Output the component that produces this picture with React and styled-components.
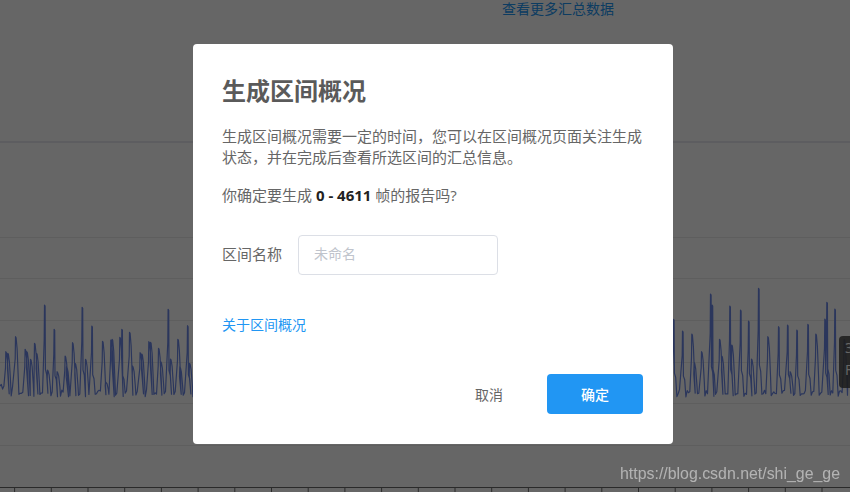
import React from 'react';
import styled, { createGlobalStyle } from 'styled-components';

const leftPeaks = [
  [18, 275], [24, 280], [47, 230], [76, 268], [81, 275], [92, 298], [104, 250], [110, 280],
  [134, 135], [143, 330], [163, 208], [172, 335], [196, 288], [200, 320], [218, 248], [226, 310],
  [247, 142], [257, 298], [276, 198], [308, 244], [317, 365], [333, 240], [337, 238], [360, 232],
  [366, 208], [389, 217], [398, 318], [421, 278], [426, 282], [447, 245], [452, 247], [476, 265],
  [483, 305], [505, 148], [512, 297], [534, 238], [540, 320], [563, 197], [569, 310],
];

const rightPeaks = [
  [11, 178], [38, 213], [66, 222], [73, 307], [95, 275], [122, 102], [127, 135], [149, 238],
  [156, 288], [180, 138], [186, 255], [212, 150], [236, 183], [245, 297], [266, 85], [294, 230],
  [326, 200], [353, 195], [361, 335], [381, 210], [414, 193], [438, 222], [465, 177], [471, 127],
  [495, 147], [523, 238], [535, 330],
];

// peaks were read off a 3x crop, so bring them back to page pixels
const peaks = [
  ...leftPeaks.map(([x, y]) => [x / 3, 260 + y / 3]),
  ...rightPeaks.map(([x, y]) => [670 + x / 3, 260 + y / 3]),
];

const buildTrace = () => {
  let seed = 7;
  const noise = () => {
    seed = (seed * 16807) % 2147483647;
    return seed / 2147483647;
  };
  const pts = [[0, 386]];
  let cursor = 0;
  peaks.forEach(([x, top]) => {
    while (cursor < x - 2) {
      cursor += 1.3;
      if (cursor < x - 2) {
        const base = cursor < 14 ? 387 : 392;
        pts.push([cursor, base + (noise() - 0.5) * 5]);
      }
    }
    const h = 392 - top;
    pts.push([x - 0.5, top + h * 0.4]);
    pts.push([x - 0.2, top]);
    pts.push([x + 0.4, top + 1]);
    if (h < 60) {
      pts.push([x + 1.4, top + h * 0.22]);
      pts.push([x + 2.6, top + h * 0.75]);
    } else {
      pts.push([x + 0.7, top + h * 0.74]);
      pts.push([x + 2, top + h * 0.8]);
    }
    pts.push([x + 3.2, 393 + noise() * 4]);
    cursor = x + 3.2;
  });
  while (cursor < 850) {
    cursor += 1.3;
    pts.push([cursor, 392 + (noise() - 0.5) * 5]);
  }
  return pts.map(([x, y], i) => `${i ? 'L' : 'M'}${x.toFixed(1)} ${y.toFixed(1)}`).join('');
};

const trace = buildTrace();
const gridLines = [237, 278, 320, 362, 403, 445];
const ticks = Array.from({ length: 23 }, (_, i) => 14.6 + i * 36.7);

const App = () => {
  return (
    <Page>
      <GlobalStyle />
      <MoreRow>
        <MoreLink>查看更多汇总数据</MoreLink>
      </MoreRow>
      <Chart viewBox="0 16 850 476" preserveAspectRatio="none">
        <line x1="0" x2="850" y1="142" y2="142" stroke="#e8e8f0" strokeWidth="2" />
        {gridLines.map((y) => (
          <line key={y} x1="0" x2="850" y1={y + 0.5} y2={y + 0.5} stroke="#ececec" />
        ))}
        <path d={trace} fill="none" stroke="#6c88e6" strokeWidth="1.2" strokeLinejoin="round" />
        <line x1="0" x2="850" y1="487.5" y2="487.5" stroke="#6a6a6a" />
        {ticks.map((x) => (
          <line key={x} x1={x} x2={x} y1="487" y2="492" stroke="#6a6a6a" />
        ))}
      </Chart>
      <Tooltip>
        <span>3</span>
        <span>F</span>
      </Tooltip>

      <Overlay>
        <Modal>
          <Title>生成区间概况</Title>
          <Text>生成区间概况需要一定的时间，您可以在区间概况页面关注生成状态，并在完成后查看所选区间的汇总信息。</Text>
          <Question>
            你确定要生成 <b>0 - 4611</b> 帧的报告吗?
          </Question>
          <Field>
            <FieldLabel>区间名称</FieldLabel>
            <NameInput placeholder="未命名" />
          </Field>
          <AboutLink>关于区间概况</AboutLink>
          <Footer>
            <CancelButton>取消</CancelButton>
            <OkButton>确定</OkButton>
          </Footer>
        </Modal>
      </Overlay>

      <Watermark>https://blog.csdn.net/shi_ge_ge</Watermark>
    </Page>
  );
};

const GlobalStyle = createGlobalStyle`
  html, body {
    margin: 0;
    padding: 0;
    background: #fff;
  }
  body {
    font-family: "Open Sans", "Noto Sans CJK SC", sans-serif;
  }
`;

const Page = styled.div`
  position: relative;
  width: 850px;
  height: 492px;
  overflow: hidden;
  display: flex;
  flex-direction: column;
  background: #fff;
`;

const MoreRow = styled.div`
  height: 16px;
  padding-left: 502px;
  line-height: 16px;
`;

const MoreLink = styled.a`
  font-size: 14px;
  color: #2196f3;
`;

const Chart = styled.svg`
  display: block;
  width: 850px;
  height: 476px;
`;

const Tooltip = styled.div`
  position: absolute;
  left: 839px;
  top: 336px;
  width: 120px;
  height: 52px;
  box-sizing: border-box;
  padding: 1px 6px;
  display: flex;
  flex-direction: column;
  border-radius: 4px;
  background: rgba(70, 70, 70, 0.85);
  color: #fff;
  font-size: 14px;
  line-height: 22px;
`;

const Overlay = styled.div`
  position: fixed;
  inset: 0;
  width: 850px;
  height: 492px;
  box-sizing: border-box;
  padding: 0 0 4px 16px;
  display: flex;
  align-items: center;
  justify-content: center;
  background: rgba(0, 0, 0, 0.6);
`;

const Modal = styled.div`
  width: 480px;
  height: 400px;
  box-sizing: border-box;
  padding: 29px 30px 30px 29px;
  display: flex;
  flex-direction: column;
  border-radius: 4px;
  background: #fff;
  color: #666;
`;

const Title = styled.h2`
  margin: 0;
  font-size: 24px;
  line-height: 36px;
  font-weight: 700;
  color: #5a5a5a;
`;

const Text = styled.p`
  margin: 17px 0 0;
  font-size: 15px;
  line-height: 21px;
`;

const Question = styled.p`
  margin: 16px 0 0;
  font-size: 15px;
  line-height: 22px;

  & b {
    color: #222;
    font-weight: 700;
  }
`;

const Field = styled.div`
  margin-top: 29px;
  display: flex;
  align-items: center;
  gap: 16px;
`;

const FieldLabel = styled.label`
  font-size: 15px;
  line-height: 20px;
  margin-top: -2px;
`;

const NameInput = styled.input`
  width: 200px;
  height: 40px;
  box-sizing: border-box;
  padding: 0 15px 3px;
  border: 1px solid #dcdfe6;
  border-radius: 4px;
  outline: none;
  font-family: inherit;
  font-size: 14px;

  &::placeholder {
    color: #c0c4cc;
  }
`;

const AboutLink = styled.a`
  margin-top: 40px;
  font-size: 14px;
  line-height: 20px;
  color: #2196f3;
`;

const Footer = styled.div`
  margin-top: auto;
  display: flex;
  justify-content: flex-end;
  align-items: center;
`;

const CancelButton = styled.button`
  width: 96px;
  height: 40px;
  margin-right: 10px;
  padding: 0;
  border: 0;
  background: transparent;
  font-family: inherit;
  font-size: 14px;
  color: #666;
`;

const OkButton = styled.button`
  width: 96px;
  height: 40px;
  padding: 0;
  border: 0;
  border-radius: 4px;
  background: #2196f3;
  font-family: inherit;
  font-size: 14px;
  font-weight: 500;
  color: #fff;
`;

const Watermark = styled.div`
  position: absolute;
  right: 10px;
  top: 464px;
  font-family: "Liberation Sans", Arial, sans-serif;
  font-size: 15.9px;
  line-height: 20px;
  color: rgba(255, 255, 255, 0.5);
`;

export default App;
